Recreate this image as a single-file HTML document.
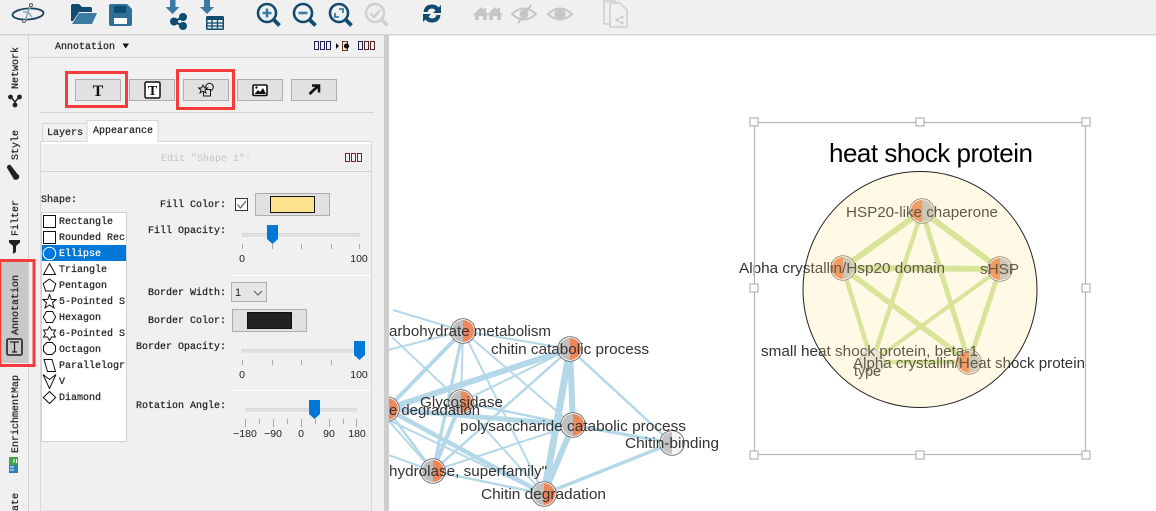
<!DOCTYPE html>
<html><head><meta charset="utf-8"><style>
html,body{margin:0;padding:0;width:1156px;height:511px;overflow:hidden;background:#fff}
svg{display:block}
.m{font-family:"Liberation Mono",monospace;font-size:10px;fill:#222;stroke:#222;stroke-width:.22}
.n{font-family:"Liberation Sans",sans-serif;font-size:10.5px;fill:#222;text-anchor:middle}
.l{font-family:"Liberation Sans",sans-serif;font-size:15px;fill:#333}
.b{fill:#e1e1e1;stroke:#adadad;stroke-width:1}
.i{fill:none;stroke:#111;stroke-width:1}
.z{fill:none;stroke:#0f4c70;stroke-width:2.6}
.e1{stroke:#b5d8e8;fill:none}
.e2{stroke:#cfe59f;fill:none}
.h{fill:#fff;stroke:#b5b5b5;stroke-width:1.2}
.t{font-family:"Liberation Serif",serif;font-weight:bold;fill:#111;text-anchor:middle}
</style></head><body>
<svg width="1156" height="511" viewBox="0 0 1156 511" xmlns="http://www.w3.org/2000/svg">
<defs>
<clipPath id="cv"><rect x="389" y="35" width="767" height="476"/></clipPath>
<g id="NL"><circle r="12.3" fill="#fff" stroke="#666" stroke-width=".9"/><path d="M0-11a11 11 0 0 0 0 22z" fill="#bfbfbf"/><path d="M0-11a11 11 0 0 1 0 22z" fill="#f0875a"/></g>
<g id="NR"><circle r="12.3" fill="#fff" stroke="#777" stroke-width=".9"/><path d="M0-11a11 11 0 0 1 0 22z" fill="#bfbfbf"/><path d="M0-11a11 11 0 0 0 0 22z" fill="#f0875a"/></g>
</defs>
<rect width="1156" height="511" fill="#fff"/>
<rect width="389" height="511" fill="#f0f0f0"/>
<rect width="1156" height="34" fill="#f0f0f0"/>
<rect y="34" width="1156" height="1.4" fill="#d4d4d4"/>
<rect x="384" y="35" width="5" height="476" fill="#cdcdcd"/>
<rect x="28" y="35" width="1" height="476" fill="#d0d0d0"/>
<rect x="29" y="57" width="355" height="1" fill="#d4d4d4"/>
<rect x="39" y="112" width="335" height="1" fill="#d4d4d4"/>

<!-- logo -->
<ellipse cx="28" cy="14" rx="15.500" ry="5.500" fill="none" stroke="#17455f" stroke-width="1.800" transform="rotate(-4 28 14)"/>
<path d="M31 5L28 12L25 21M28 12L23 12M28 12L32 17" fill="none" stroke="#8fa9b8" stroke-width="1.600"/>
<circle cx="31" cy="5" r="1.500" fill="#fff" stroke="#556"/><circle cx="24" cy="21" r="1.500" fill="#fff" stroke="#556"/>
<!-- folder -->
<path d="M71 21V6q0-2 2-2h6l3 3h8q2 0 2 2v3H79l-6 9z" fill="#0f4c70"/>
<path d="M79 13h18l-5 11H72z" fill="#3b7ba3"/>
<!-- save -->
<path d="M109 6q0-2 2-2h16l5 5v15q0 2-2 2h-19q-2 0-2-2z" fill="#2f6f98"/>
<rect x="114" y="6" width="12" height="7" fill="#0f4c70"/><rect x="114" y="18" width="13" height="6" fill="#fff"/>
<!-- import network -->
<path d="M170 0h5.500v7h4l-7 7l-7-7h4.500z" fill="#3b7ba3"/>
<path d="M183 17L174 21.500L183 26" fill="none" stroke="#0f4c70" stroke-width="2.200"/>
<circle cx="183" cy="17" r="4" fill="#0f4c70"/><circle cx="174" cy="21.500" r="4" fill="#0f4c70"/><circle cx="183" cy="26" r="4" fill="#0f4c70"/>
<!-- import table -->
<path d="M204 0h6v7h4l-7 7l-7-7h4z" fill="#3b7ba3"/>
<rect x="206" y="16" width="18" height="14" rx="1.500" fill="#0f4c70"/>
<path d="M207.500 20h15v8.500h-15z" fill="#e8eef2"/>
<path d="M207 23h16M207 26h16M212 20v9M217.500 20v9" stroke="#0f4c70" stroke-width="1.300"/>
<!-- zoom -->
<g class="z"><circle cx="267" cy="13" r="9"/><path d="M273.500 19.500L279.500 25.500" stroke-width="3.800"/><path d="M262.500 13h9M267 8.500v9" stroke="#3b7ba3"/></g>
<g class="z"><circle cx="303" cy="13" r="9"/><path d="M309.500 19.500L315.500 25.500" stroke-width="3.800"/><path d="M298.500 13h9" stroke="#3b7ba3"/></g>
<g class="z"><circle cx="339" cy="13" r="9"/><path d="M345.500 19.500L351.500 25.500" stroke-width="3.800"/><path d="M335 13v4h4M343 13v-4h-4" stroke="#3b7ba3" stroke-width="1.800"/></g>
<g fill="none" stroke="#cfcfcf" stroke-width="2.400"><circle cx="375" cy="13" r="9"/><path d="M381.500 19.500L387.500 25.500" stroke-width="3.500"/><path d="M370.500 13l3.500 4l6-7"/></g>
<!-- refresh -->
<path d="M423.500 12q1-7.500 8.500-7.500q4.500 0 6.500 3l2.500-2.500v8h-8l2.500-2.500q-1.500-2-3.500-2q-3.500 0-4.500 3.500z" fill="#0f4c70"/>
<path d="M440.500 15q-1 7.500-8.500 7.500q-4.500 0-6.500-3L423 22v-8h8l-2.500 2.500q1.500 2 3.500 2q3.500 0 4.500-3.500z" fill="#0f4c70"/>
<!-- homes -->
<g fill="#c6c6c6"><path d="M473 15l8-8l8 8h-2v5h-4v-4h-4v4h-4v-5z"/><path d="M487 15l8-8l8 8h-2v5h-4v-4h-4v4h-4v-5z"/><rect x="484" y="8" width="2" height="4"/><rect x="498" y="8" width="2" height="4"/></g>
<path d="M512 14q12-11 24 0q-12 11-24 0z" fill="none" stroke="#c6c6c6" stroke-width="2"/>
<circle cx="524" cy="14" r="4.500" fill="#c6c6c6"/><path d="M518 23L531 5" stroke="#c6c6c6" stroke-width="2"/>
<path d="M548 14q12-11 24 0q-12 11-24 0z" fill="none" stroke="#c6c6c6" stroke-width="2"/>
<circle cx="560" cy="14" r="5.500" fill="#c6c6c6"/>
<!-- docs -->
<g fill="#f0f0f0" stroke="#cdcdcd" stroke-width="1.500"><path d="M604 1h11l5 5v18h-16z"/><path d="M610 3h10l7 7v17h-17z"/></g>
<g fill="#cdcdcd"><circle cx="617" cy="20" r="1.600"/><circle cx="622" cy="17" r="1.600"/><circle cx="622" cy="23" r="1.600"/></g>
<path d="M622 17L617 20L622 23" fill="none" stroke="#cdcdcd"/>

<!-- left tabs -->
<rect x="2" y="262" width="26" height="101" fill="#c8c8c8"/>
<g class="m">
<text transform="translate(18 89) rotate(-90)">Network</text>
<text transform="translate(18 160) rotate(-90)">Style</text>
<text transform="translate(18 236) rotate(-90)">Filter</text>
<text transform="translate(18 335) rotate(-90)">Annotation</text>
<text transform="translate(18 453) rotate(-90)">EnrichmentMap</text>
<text transform="translate(18 511) rotate(-90)">ate</text>
</g>
<path d="M11 97L15 102L19 97M15 102V106" stroke="#222" stroke-width="1.500" fill="none"/>
<circle cx="10.500" cy="97" r="2.400" fill="#222"/><circle cx="19.500" cy="97" r="2.400" fill="#222"/><circle cx="15" cy="105" r="2.400" fill="#222"/>
<path d="M8 165q2-1 3 0l6 9q3 2 1 5q-3 2-5 0l-6-12z" fill="#222" transform="rotate(-4 14 170)"/>
<path d="M9 240H20V242.500L16 246V252L13 254V246L9 242.500z" fill="#222"/>
<rect x="7" y="339" width="15" height="16" rx="1.500" fill="#c8c8c8" stroke="#222" stroke-width="1.600"/>
<text class="t" style="font-size:14px" transform="translate(19 347) rotate(-90)" x="0" y="0" dy="0"></text>
<path d="M10 342H19M14.500 342V352M12 352H17" stroke="#222" stroke-width="1.300" fill="none"/>
<rect x="9" y="457" width="9" height="8" fill="#3aa648"/><rect x="9" y="465" width="9" height="8" fill="#2a7fb8"/>
<path d="M10 467H14M10 470H14M14 459V463M16.500 459V463" stroke="#fff" fill="none"/>

<!-- panel header -->
<text class="m" x="55" y="49">Annotation</text>
<path d="M122.500 43.500H129L125.700 48.500z" fill="#111"/>
<g fill="none" stroke-width="1">
<rect x="314.500" y="41.500" width="4" height="8" stroke="#225"/><rect x="320.500" y="41.500" width="4" height="8" stroke="#225"/><rect x="326.500" y="41.500" width="4" height="8" stroke="#225"/>
<rect x="358.500" y="41.500" width="4" height="8" stroke="#225"/><rect x="364.500" y="41.500" width="4" height="8" stroke="#522"/><rect x="370.500" y="41.500" width="4" height="8" stroke="#522"/>
</g>
<path d="M336 43L339 46L336 49z" fill="#111"/><rect x="342.500" y="41.500" width="5" height="9" fill="none" stroke="#631"/><circle cx="346.500" cy="46" r="2.600" fill="#111"/>

<!-- buttons -->
<rect class="b" x="75.500" y="79.500" width="45" height="21"/>
<rect class="b" x="129.500" y="79.500" width="45" height="21"/>
<rect class="b" x="183.500" y="79.500" width="45" height="21"/>
<rect class="b" x="237.500" y="79.500" width="45" height="21"/>
<rect class="b" x="291.500" y="79.500" width="45" height="21"/>
<text class="t" x="98" y="96" style="font-size:16px">T</text>
<rect x="145" y="82" width="15" height="16" rx="1.500" fill="#fff" stroke="#111" stroke-width="1.500"/>
<text class="t" x="152.500" y="95" style="font-size:14px">T</text>
<circle cx="209.500" cy="87" r="3.800" fill="#e1e1e1" stroke="#111"/>
<rect x="203.500" y="89.500" width="7" height="6.500" fill="#e1e1e1" stroke="#111"/>
<path d="M203 85L204.500 88H207.500L205 90L206 93L203 91.200L200 93L201 90L198.500 88H201.500z" fill="#e1e1e1" stroke="#111" stroke-width=".9"/>
<rect x="253" y="85" width="14" height="10.500" rx="1" fill="#fff" stroke="#111" stroke-width="1.600"/>
<path d="M254.500 94L258 90L260 92L263 88L266 94z" fill="#111"/><circle cx="256.500" cy="87.500" r="1.200" fill="#111"/>
<path d="M309.500 94L318 86M312 85.500H319V92.500" fill="none" stroke="#111" stroke-width="2.600"/>
<!-- panel tabs -->
<rect x="40.500" y="141.500" width="331" height="369.500" fill="#f0f0f0" stroke="#d8d8d8"/>
<rect x="41" y="142" width="330" height="2" fill="#fff"/>
<path d="M42.500 141V123.500H87" fill="#f0f0f0" stroke="#d4d4d4"/>
<path d="M87 141.500V120.500H158V141.500" fill="#fff" stroke="#d4d4d4"/>
<rect x="87.500" y="140" width="70" height="3" fill="#fff"/>
<text class="m" x="47" y="135">Layers</text>
<text class="m" x="93" y="133">Appearance</text>
<rect x="41" y="171" width="330" height="1" fill="#d0d0d0"/>
<text x="161" y="161" style="font-family:'Liberation Mono',monospace;font-size:10px;fill:#c4c4c4">Edit "Shape 1":</text>
<g fill="none"><rect x="345.500" y="153.500" width="4" height="8" stroke="#722"/><rect x="351.500" y="153.500" width="4" height="8" stroke="#722"/><rect x="357.500" y="153.500" width="4" height="8" stroke="#722"/></g>

<!-- shape list -->
<text class="m" x="41" y="202">Shape:</text>
<rect x="41.500" y="212.500" width="85" height="229" fill="#fff" stroke="#d0d0d0"/>
<rect x="42" y="245" width="84" height="16" fill="#0078d7"/>
<g class="m">
<text x="59" y="224">Rectangle</text><text x="59" y="240">Rounded Rec</text><text x="59" y="256" style="fill:#fff;stroke:#fff">Ellipse</text>
<text x="59" y="272">Triangle</text><text x="59" y="288">Pentagon</text><text x="59" y="304">5-Pointed S</text>
<text x="59" y="320">Hexagon</text><text x="59" y="336">6-Pointed S</text><text x="59" y="352">Octagon</text>
<text x="59" y="368">Parallelogr</text><text x="59" y="384">V</text><text x="59" y="400">Diamond</text>
</g>
<rect class="i" x="43.500" y="215.500" width="12" height="12"/>
<rect class="i" x="43.500" y="231.500" width="12" height="12"/>
<circle cx="49.500" cy="253.500" r="6.200" fill="none" stroke="#fff"/>
<path class="i" d="M49.500 263.500L55.500 274.500H43.500z"/>
<path class="i" d="M49.500 279L55.800 283.700L53.300 291H45.700L43.200 283.700z"/>
<path class="i" d="M49.500 294.500L51.300 299.500H56L52.500 302.700L54 308L49.500 305L45 308L46.500 302.700L43 299.500H47.700z"/>
<path class="i" d="M46.500 311.500H52.500L55.700 317L52.500 322.500H46.500L43.300 317z"/>
<path class="i" d="M49.500 326.500L51.500 330H55.500L53.500 333.500L55.500 337H51.500L49.500 340.500L47.500 337H43.500L45.500 333.500L43.500 330H47.500z"/>
<path class="i" d="M46.800 342.500H52.200L55.500 346V351L52.200 354.500H46.800L43.500 351V346z"/>
<path class="i" d="M44 359.500H52L55.500 371.500H47.500z"/>
<path class="i" d="M43 374.500L49.500 379.500L56 374.500L49.500 388.500z"/>
<path class="i" d="M49.500 391.500L55.700 397.500L49.500 403.500L43.300 397.500z"/>

<!-- form -->
<g class="m" text-anchor="end">
<text x="226" y="207">Fill Color:</text>
<text x="226" y="233">Fill Opacity:</text>
<text x="226" y="295">Border Width:</text>
<text x="226" y="323">Border Color:</text>
<text x="226" y="349">Border Opacity:</text>
<text x="226" y="408">Rotation Angle:</text>
</g>
<rect x="235.500" y="198.500" width="12" height="12" fill="#fff" stroke="#333"/>
<path d="M237.500 204.500L240.500 208L246 201" fill="none" stroke="#555" stroke-width="1.100"/>
<rect class="b" x="255.500" y="193.500" width="74" height="22"/>
<rect x="270.500" y="196.500" width="44" height="16" fill="#ffe28e" stroke="#111"/>
<!-- fill opacity slider -->
<rect x="242.500" y="233.500" width="117" height="2.500" fill="#e4e4e4" stroke="#d6d6d6"/>
<path d="M267 225H278V239L272.500 244L267 239z" fill="#0078d7"/>
<path d="M242.500 244V249M272.500 244V249M301.500 244V249M331.500 244V249M359.500 244V249" stroke="#aaa"/>
<text class="n" x="242" y="262">0</text><text class="n" x="359" y="262">100</text>
<rect x="231" y="275" width="140" height="1" fill="#fff"/>
<rect x="231.500" y="282.500" width="35" height="19" fill="#e6e6e6" stroke="#adadad"/>
<text class="n" x="238" y="296" style="font-size:11px">1</text>
<path d="M254 291L258 295L262 291" fill="none" stroke="#555"/>
<rect class="b" x="232.500" y="309.500" width="74" height="22"/>
<rect x="247.500" y="312.500" width="44" height="16" fill="#222" stroke="#111"/>
<rect x="242.500" y="349.500" width="117" height="2.500" fill="#e4e4e4" stroke="#d6d6d6"/>
<path d="M354 341H365V355L359.500 360L354 355z" fill="#0078d7"/>
<path d="M242.500 360V365M272.500 360V365M301.500 360V365M331.500 360V365" stroke="#aaa"/>
<text class="n" x="242" y="378">0</text><text class="n" x="359" y="378">100</text>
<rect x="231" y="390" width="140" height="1" fill="#fff"/>
<rect x="245.500" y="408.500" width="111" height="2.500" fill="#e4e4e4" stroke="#d6d6d6"/>
<path d="M309 400H320V414L314.500 419L309 414z" fill="#0078d7"/>
<path d="M245.500 419V427M259.500 419V424M273.500 419V427M287.500 419V424M301.500 419V427M315.500 419V424M329.500 419V427M343.500 419V424M356.500 419V427" stroke="#aaa"/>
<text class="n" x="245" y="437">−180</text><text class="n" x="273" y="437">−90</text><text class="n" x="301" y="437">0</text><text class="n" x="329" y="437">90</text><text class="n" x="357" y="437">180</text>

<!-- red highlights -->
<g fill="none" stroke="#f33c3c" stroke-width="3">
<rect x="66.500" y="72.500" width="60" height="34"/>
<rect x="177.500" y="70.500" width="56" height="38"/>
<rect x="0" y="260.500" width="34" height="105"/>
</g>

<!-- left network -->
<g clip-path="url(#cv)">
<g class="e1">
<path stroke-width="2" d="M393 310L463 331M380 352L463 331M392 337L461 402M388 420L433 471M380 452L433 471M378 415L544 494"/>
<path stroke-width="4" d="M463 331L387 409"/>
<path stroke-width="3.200" d="M463 331L433 471"/>
<path stroke-width="2" d="M463 331L461 402M463 331L573 425M463 331L544 494M463 331L570 349"/>
<path stroke-width="6" d="M570 349L387 409"/>
<path stroke-width="7" d="M570 349L544 494"/>
<path stroke-width="6" d="M570 349L573 425"/>
<path stroke-width="2.500" d="M570 349L433 471M570 349L672 443"/>
<path stroke-width="2" d="M570 349L461 402"/>
<path stroke-width="5" d="M387 409L573 425"/>
<path stroke-width="4.500" d="M387 409L544 494"/>
<path stroke-width="2.500" d="M387 409L433 471"/>
<path stroke-width="4" d="M461 402L433 471"/>
<path stroke-width="2.500" d="M461 402L573 425"/>
<path stroke-width="2" d="M461 402L544 494"/>
<path stroke-width="2" d="M433 471L573 425"/>
<path stroke-width="2.500" d="M433 471L544 494"/>
<path stroke-width="6" d="M573 425L544 494"/>
<path stroke-width="3.200" d="M573 425L672 443"/>
<path stroke-width="3.500" d="M544 494L672 443"/>
</g>
<use href="#NL" x="463" y="331"/><use href="#NL" x="570" y="349"/><use href="#NL" x="461" y="402"/><use href="#NL" x="573" y="425"/><use href="#NL" x="433" y="471"/><use href="#NL" x="544" y="494"/><use href="#NL" x="387" y="409"/>
<g transform="translate(672 443)"><circle r="12.300" fill="#fff" stroke="#666" stroke-width=".9"/><path d="M0-11a11 11 0 0 0 0 22z" fill="#c4c4c4"/><path d="M0-11a11 11 0 0 1 0 22z" fill="#f3f3f1"/></g>
<g class="l">
<text x="389" y="336" textLength="162" lengthAdjust="spacingAndGlyphs">arbohydrate metabolism</text>
<text x="491" y="354" textLength="158" lengthAdjust="spacingAndGlyphs">chitin catabolic process</text>
<text x="389" y="415" textLength="91" lengthAdjust="spacingAndGlyphs">e degradation</text>
<text x="420" y="407" textLength="83" lengthAdjust="spacingAndGlyphs">Glycosidase</text>
<text x="460" y="431" textLength="226" lengthAdjust="spacingAndGlyphs">polysaccharide catabolic process</text>
<text x="625" y="448" textLength="94" lengthAdjust="spacingAndGlyphs">Chitin-binding</text>
<text x="389" y="476" textLength="158" lengthAdjust="spacingAndGlyphs">hydrolase, superfamily"</text>
<text x="481" y="499" textLength="125" lengthAdjust="spacingAndGlyphs">Chitin degradation</text>
</g>

<!-- right network -->
<g class="e2">
<path stroke-width="6" d="M922 211L843 268M922 211L1000 269M843 268L1000 269"/>
<path stroke-width="4.500" d="M922 211L872 362M843 268L872 362M872 362L969 362"/>
<path stroke-width="5" d="M922 211L969 362M1000 269L969 362"/>
<path stroke-width="5.500" d="M843 268L969 362"/>
<path stroke-width="4" d="M1000 269L872 362"/>
</g>
<use href="#NR" x="922" y="211"/><use href="#NR" x="843" y="268"/><use href="#NR" x="1000" y="269"/><use href="#NR" x="969" y="362"/>
<circle cx="872" cy="362" r="12.300" fill="#e6e6e6" stroke="#bbb" stroke-width=".8"/>
<g class="l">
<text x="846" y="217" textLength="152" lengthAdjust="spacingAndGlyphs">HSP20-like chaperone</text>
<text x="739" y="273" textLength="206" lengthAdjust="spacingAndGlyphs">Alpha crystallin/Hsp20 domain</text>
<text x="980" y="274" textLength="39" lengthAdjust="spacingAndGlyphs">sHSP</text>
<text x="761" y="356" textLength="217" lengthAdjust="spacingAndGlyphs">small heat shock protein, beta-1</text>
<text x="854" y="376" textLength="27" lengthAdjust="spacingAndGlyphs">type</text>
<text x="853" y="368" textLength="232" lengthAdjust="spacingAndGlyphs">Alpha crystallin/Heat shock protein</text>
</g>
<ellipse cx="920" cy="289.500" rx="117" ry="118" fill="#ffe28e" fill-opacity=".22" stroke="#222" stroke-width="1"/>
<text x="829" y="162" textLength="204" lengthAdjust="spacing" style="font-family:'Liberation Sans',sans-serif;font-size:26px;fill:#000">heat shock protein</text>
<rect x="754.500" y="122.500" width="331" height="332" fill="none" stroke="#b5b5b5" stroke-width="1.200"/>
<rect class="h" x="750" y="118" width="8" height="8"/><rect class="h" x="916" y="118" width="8" height="8"/><rect class="h" x="1082" y="118" width="8" height="8"/>
<rect class="h" x="750" y="284" width="8" height="8"/><rect class="h" x="1082" y="284" width="8" height="8"/>
<rect class="h" x="750" y="451" width="8" height="8"/><rect class="h" x="916" y="451" width="8" height="8"/><rect class="h" x="1082" y="451" width="8" height="8"/>
</g>
</svg>
</body></html>
